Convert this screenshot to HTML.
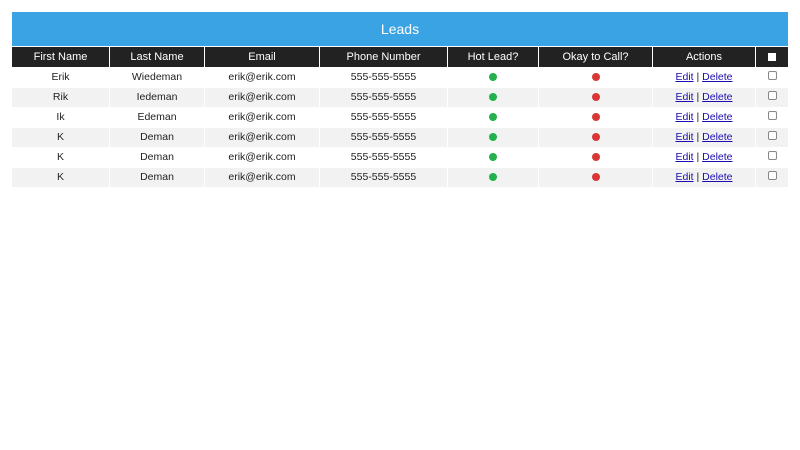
<!DOCTYPE html>
<html><head><style>
body{margin:0;background:#fff;font-family:"Liberation Sans",sans-serif;font-size:10.5px;color:#222}
.wrap{position:absolute;left:12px;top:12px;width:776px}
.title{height:34px;background:#3aa3e3;color:#fff;font-size:14px;line-height:35px;text-align:center}
.row{display:flex;height:19px;margin-top:1px}
.row div{text-align:center;line-height:19px;margin-right:1px;position:relative}
.row div:last-child{margin-right:0}
.hd{height:20px}
.hd div{background:#222;color:#fff;font-size:11px;line-height:20px}
.odd div{background:#fff}
.even div{background:#f2f2f2}
.c1{width:97px}.c2{width:94px}.c3{width:114px}.c4{width:127px}.c5{width:90px}.c6{width:113px}.c7{width:102px}.c8{width:32px}
.dot{display:inline-block;width:8px;height:8px;border-radius:50%;vertical-align:middle}
.g{background:#22b14c}.r{background:#d93636}
a{color:#1a0dab}
.cb{display:inline-block;width:7px;height:7px;border:1px solid #888;border-radius:2px;background:#fff;vertical-align:middle;margin-top:-3px}
.wb{display:inline-block;width:8px;height:8px;background:#fff;vertical-align:middle}
</style></head><body><div class="wrap">
<div class="title">Leads</div>
<div class="row hd"><div class="c1">First Name</div><div class="c2">Last Name</div><div class="c3">Email</div><div class="c4">Phone Number</div><div class="c5">Hot Lead?</div><div class="c6">Okay to Call?</div><div class="c7">Actions</div><div class="c8"><span class="wb"></span></div></div>
<div class="row odd"><div class="c1">Erik</div><div class="c2">Wiedeman</div><div class="c3">erik@erik.com</div><div class="c4">555-555-5555</div><div class="c5"><span class="dot g"></span></div><div class="c6"><span class="dot r"></span></div><div class="c7"><a href="#">Edit</a> | <a href="#">Delete</a></div><div class="c8"><span class="cb"></span></div></div>
<div class="row even"><div class="c1">Rik</div><div class="c2">Iedeman</div><div class="c3">erik@erik.com</div><div class="c4">555-555-5555</div><div class="c5"><span class="dot g"></span></div><div class="c6"><span class="dot r"></span></div><div class="c7"><a href="#">Edit</a> | <a href="#">Delete</a></div><div class="c8"><span class="cb"></span></div></div>
<div class="row odd"><div class="c1">Ik</div><div class="c2">Edeman</div><div class="c3">erik@erik.com</div><div class="c4">555-555-5555</div><div class="c5"><span class="dot g"></span></div><div class="c6"><span class="dot r"></span></div><div class="c7"><a href="#">Edit</a> | <a href="#">Delete</a></div><div class="c8"><span class="cb"></span></div></div>
<div class="row even"><div class="c1">K</div><div class="c2">Deman</div><div class="c3">erik@erik.com</div><div class="c4">555-555-5555</div><div class="c5"><span class="dot g"></span></div><div class="c6"><span class="dot r"></span></div><div class="c7"><a href="#">Edit</a> | <a href="#">Delete</a></div><div class="c8"><span class="cb"></span></div></div>
<div class="row odd"><div class="c1">K</div><div class="c2">Deman</div><div class="c3">erik@erik.com</div><div class="c4">555-555-5555</div><div class="c5"><span class="dot g"></span></div><div class="c6"><span class="dot r"></span></div><div class="c7"><a href="#">Edit</a> | <a href="#">Delete</a></div><div class="c8"><span class="cb"></span></div></div>
<div class="row even"><div class="c1">K</div><div class="c2">Deman</div><div class="c3">erik@erik.com</div><div class="c4">555-555-5555</div><div class="c5"><span class="dot g"></span></div><div class="c6"><span class="dot r"></span></div><div class="c7"><a href="#">Edit</a> | <a href="#">Delete</a></div><div class="c8"><span class="cb"></span></div></div>
</div></body></html>
